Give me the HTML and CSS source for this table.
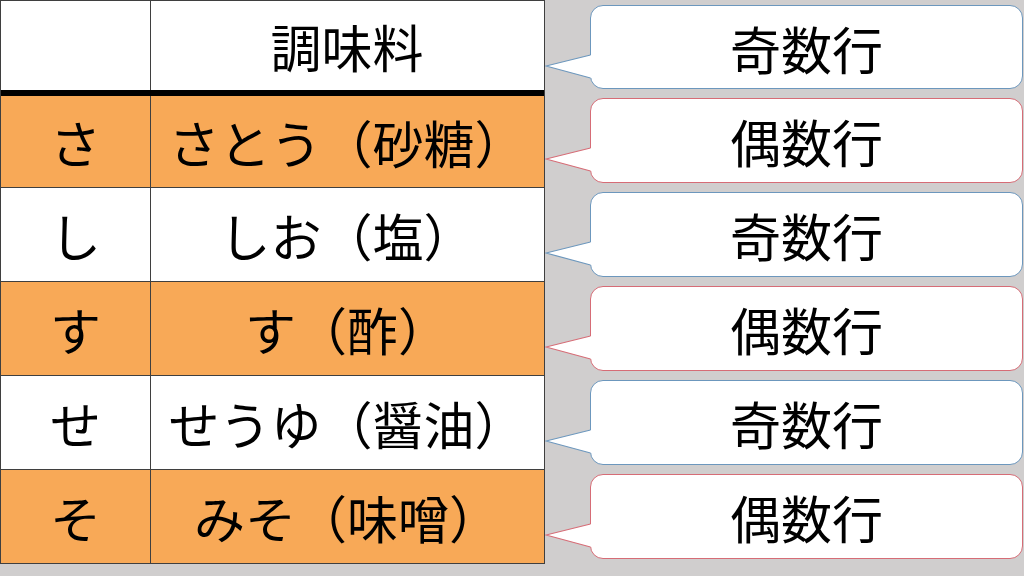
FILE: index.html
```html
<!DOCTYPE html>
<html lang="ja">
<head>
<meta charset="utf-8">
<link rel="stylesheet" href="styles.css">
</head>
<body>
<div class="page">
  <div class="table">
    <div class="row head">
      <div class="cell key"></div>
      <div class="cell val">調味料</div>
    </div>
    <div class="row even first">
      <div class="cell key">さ</div>
      <div class="cell val">さとう（砂糖）</div>
    </div>
    <div class="row odd">
      <div class="cell key">し</div>
      <div class="cell val">しお（塩）</div>
    </div>
    <div class="row even">
      <div class="cell key">す</div>
      <div class="cell val">す（酢）</div>
    </div>
    <div class="row odd">
      <div class="cell key">せ</div>
      <div class="cell val">せうゆ（醤油）</div>
    </div>
    <div class="row even last">
      <div class="cell key">そ</div>
      <div class="cell val">みそ（味噌）</div>
    </div>
  </div>
  <div class="bubbles">
    <div class="bubble blue">
      <svg class="tail" width="47" height="85" viewBox="0 0 47 85"><polygon points="47,50 45.5,50 1,61 45.5,73 47,73" fill="#fff"/><polyline points="45.5,50 1,61 45.5,73" fill="none" stroke="#6c97bd" stroke-width="1.2"/></svg>
      奇数行
    </div>
    <div class="bubble red">
      <svg class="tail" width="47" height="85" viewBox="0 0 47 85"><polygon points="47,50 45.5,50 1,61 45.5,73 47,73" fill="#fff"/><polyline points="45.5,50 1,61 45.5,73" fill="none" stroke="#d66c76" stroke-width="1.2"/></svg>
      偶数行
    </div>
    <div class="bubble blue">
      <svg class="tail" width="47" height="85" viewBox="0 0 47 85"><polygon points="47,50 45.5,50 1,61 45.5,73 47,73" fill="#fff"/><polyline points="45.5,50 1,61 45.5,73" fill="none" stroke="#6c97bd" stroke-width="1.2"/></svg>
      奇数行
    </div>
    <div class="bubble red">
      <svg class="tail" width="47" height="85" viewBox="0 0 47 85"><polygon points="47,50 45.5,50 1,61 45.5,73 47,73" fill="#fff"/><polyline points="45.5,50 1,61 45.5,73" fill="none" stroke="#d66c76" stroke-width="1.2"/></svg>
      偶数行
    </div>
    <div class="bubble blue">
      <svg class="tail" width="47" height="85" viewBox="0 0 47 85"><polygon points="47,50 45.5,50 1,61 45.5,73 47,73" fill="#fff"/><polyline points="45.5,50 1,61 45.5,73" fill="none" stroke="#6c97bd" stroke-width="1.2"/></svg>
      奇数行
    </div>
    <div class="bubble red">
      <svg class="tail" width="47" height="85" viewBox="0 0 47 85"><polygon points="47,50 45.5,50 1,61 45.5,73 47,73" fill="#fff"/><polyline points="45.5,50 1,61 45.5,73" fill="none" stroke="#d66c76" stroke-width="1.2"/></svg>
      偶数行
    </div>
  </div>
</div>
</body>
</html>
```
FILE: styles.css
```css
html, body {
  margin: 0;
  padding: 0;
}
body {
  width: 1024px;
  height: 576px;
  overflow: hidden;
  background: #d0cece;
  font-family: "Noto Sans CJK JP", "Noto Sans", sans-serif;
  color: #000;
}
.page {
  display: flex;
  align-items: flex-start;
}
.table {
  width: 543px;
  border: 1px solid #3f3f3f;
  display: flex;
  flex-direction: column;
}
.row {
  display: flex;
  height: 93px;
  border-bottom: 1px solid #3f3f3f;
}
.row.head {
  height: 89px;
  border-bottom: 6px solid #000;
  background: #fff;
}
.row.first {
  height: 91px;
}
.row.last {
  border-bottom: none;
}
.row.even {
  background: #f8a957;
}
.row.odd {
  background: #fff;
}
.cell {
  display: flex;
  align-items: center;
  justify-content: center;
  font-size: 51px;
  line-height: 1;
  padding-top: 2px;
  box-sizing: border-box;
  white-space: nowrap;
}
.cell.key {
  width: 150px;
  border-right: 1px solid #3f3f3f;
}
.cell.val {
  width: 392px;
}
.bubbles {
  display: flex;
  flex-direction: column;
  gap: 9px;
  padding-top: 5px;
  margin-left: 45px;
}
.bubble {
  position: relative;
  width: 433px;
  height: 85px;
  box-sizing: border-box;
  background: #fff;
  border: 1px solid #6c97bd;
  border-radius: 13px;
  display: flex;
  align-items: center;
  justify-content: center;
  font-size: 51px;
  line-height: 1;
  padding-top: 2px;
}
.bubble:first-child {
  height: 84px;
}
.bubble.red {
  border-color: #d66c76;
}
.tail {
  position: absolute;
  left: -46px;
  top: -1px;
}
```
